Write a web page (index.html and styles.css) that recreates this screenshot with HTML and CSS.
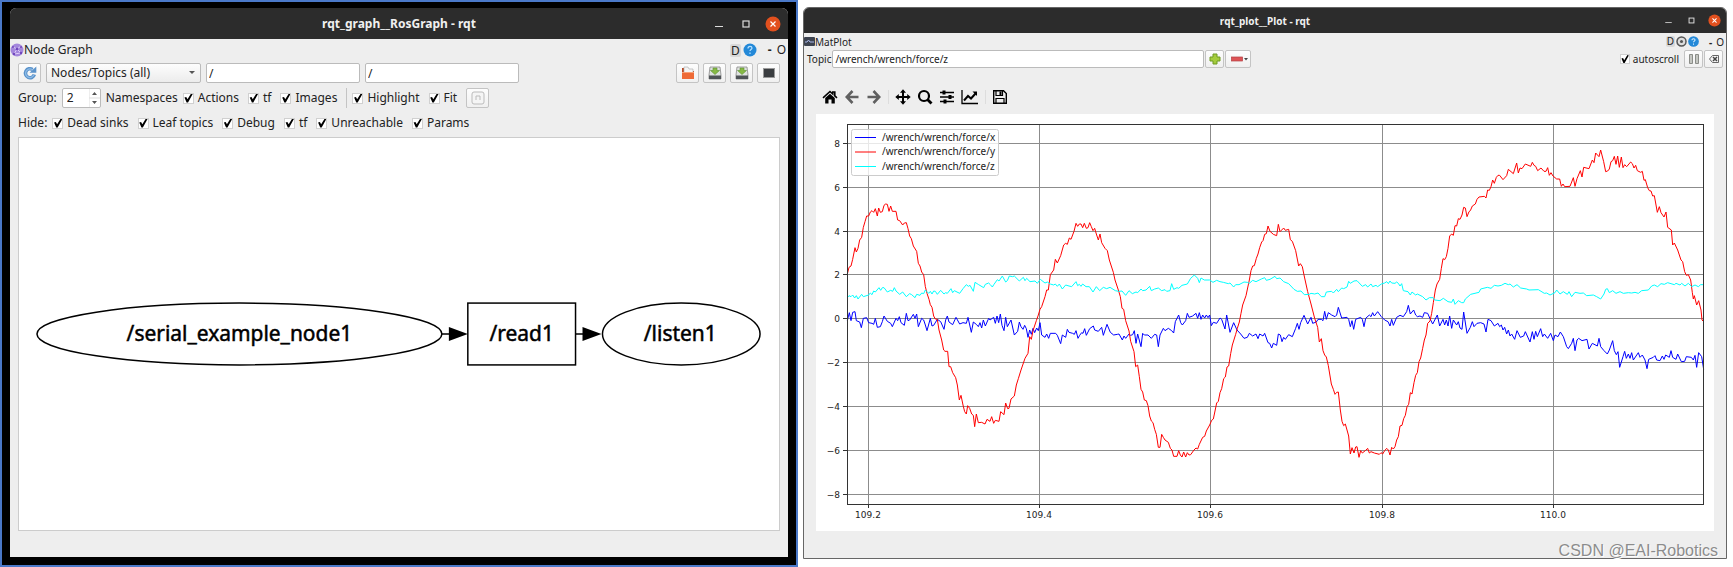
FILE: index.html
```html
<!DOCTYPE html>
<html lang="en">
<head>
	<meta charset="UTF-8">
	<title>rqt</title>
	<link rel="stylesheet" href="styles.css">
</head>
<body>
	<div class="desktop">
		<div class="shot">
			<div class="window">
				<div class="titlebar">
					<h1>rqt_graph__RosGraph - rqt</h1>
					<div class="win-btns">
						<button aria-label="Minimize"><svg width="16" height="16" viewBox="0 0 16 16"><path d="M4 10.500h8" stroke="#ddd" fill="none"/></svg></button>
						<button aria-label="Maximize"><svg width="16" height="16" viewBox="0 0 16 16"><rect x="5" y="5" width="6" height="6" stroke="#ddd" stroke-width="1.200" fill="none"/></svg></button>
						<button aria-label="Close"><svg width="16" height="16" viewBox="0 0 16 16"><circle cx="8" cy="8" r="7.500" fill="#e2501e"/><path d="M5.500 5.500l5 5m0-5l-5 5" stroke="#fff" stroke-width="1.200"/></svg></button>
					</div>
				</div>
				<div class="dock">
					<svg width="14" height="14" viewBox="0 0 14 14"><circle cx="7" cy="7" r="6.500" fill="#a487dc"/><path d="M3 4l4 2 4-3M7 6l-3 5M7 6l4 4M4 11l7-1" stroke="#dccbfa" fill="none"/><g fill="#7046bd"><circle cx="3" cy="4" r="1"/><circle cx="7" cy="6" r="1.300"/><circle cx="11" cy="4" r="1"/><circle cx="4" cy="11" r="1.200"/><circle cx="11" cy="10" r="1.200"/></g></svg>
					<h2>Node Graph</h2>
					<div class="dock-btns">
						<button class="dock-d">D</button>
						<button aria-label="Help"><svg width="14" height="14" viewBox="0 0 14 14"><circle cx="7" cy="7" r="6.500" fill="#2489d8"/><path d="M5 5.500c0-3 4-2.500 4-.500 0 1.500-2 1.500-2 3M7 9.500v1.500" stroke="#b9e2ff" stroke-width="1.200" fill="none"/></svg></button>
						<button class="dock-min">-</button>
						<button>O</button>
					</div>
				</div>
				<div class="row">
					<button class="btn" aria-label="Refresh"><svg width="16" height="16" viewBox="0 0 16 16"><path d="M12.300 9.500A4.500 4.500 0 1 1 10.500 4.500" stroke="#5b93cb" stroke-width="3.600" fill="none"/><path d="M7.500 7.800h6.800V1.500z" fill="#5b93cb"/><path d="M11.800 10A4.300 4.300 0 1 1 10 4.500" stroke="#8dbbe6" stroke-width="1.300" fill="none"/></svg></button>
					<span class="select">
						<select aria-label="Graph type"><option>Nodes/Topics (all)</option></select>
					</span>
					<input class="field" type="text" value="/" aria-label="Node filter">
					<input class="field" type="text" value="/" aria-label="Topic filter">
					<div class="right">
						<button class="btn" aria-label="Open"><svg width="16" height="16" viewBox="0 0 16 16"><path d="M2 3h4v3h8v8H2z" fill="#b84a26"/><path d="M4 2h4l1 2h4v5H4z" fill="#f4f4f4" stroke="#aaa" stroke-width=".600"/><path d="M2 7h12v7H2z" fill="#ee6a36"/><path d="M2 7.500h12" stroke="#f9a177"/></svg></button>
						<button class="btn" aria-label="Save dot"><svg width="16" height="16" viewBox="0 0 16 16"><path d="M3 2h10l1 8v4H2v-4z" fill="#dfe2df" stroke="#888" stroke-width=".800"/><path d="M2 10.500h12V14H2z" fill="#4f5357"/><path d="M6 3h4v2.500h2.500L8 9.500 3.500 5.500H6z" fill="#86b944" stroke="#5c9230" stroke-width=".600"/></svg></button>
						<button class="btn" aria-label="Save svg"><svg width="16" height="16" viewBox="0 0 16 16"><path d="M3 2h10l1 8v4H2v-4z" fill="#dfe2df" stroke="#888" stroke-width=".800"/><path d="M2 10.500h12V14H2z" fill="#4f5357"/><path d="M6 3h4v2.500h2.500L8 9.500 3.500 5.500H6z" fill="#86b944" stroke="#5c9230" stroke-width=".600"/></svg></button>
						<button class="btn" aria-label="Save image"><svg width="16" height="16" viewBox="0 0 16 16"><rect x="2.500" y="3.500" width="11" height="9" fill="#3a3d40" stroke="#999"/></svg></button>
					</div>
				</div>
				<div class="row">
					<label for="group">Group:</label>
					<span class="spin">
						<input type="number" id="group" value="2">
						<svg width="11" height="18" viewBox="0 0 11 18"><path d="M0 0v18M0 9h11" stroke="#ddd" fill="none"/><path d="M3 6l2.500-3L8 6zM3 12l2.500 3L8 12z" fill="#555"/></svg>
					</span>
					<label for="namespaces">Namespaces</label>
					<label class="check"><input type="checkbox" id="namespaces" checked>Actions</label>
					<label class="check"><input type="checkbox" checked>tf</label>
					<label class="check"><input type="checkbox" checked>Images</label>
					<span class="line"></span>
					<label class="check"><input type="checkbox" checked>Highlight</label>
					<label class="check"><input type="checkbox" checked>Fit</label>
					<button class="btn" aria-label="Fit in view"><svg width="16" height="16" viewBox="0 0 16 16"><rect x="2" y="2" width="12" height="12" rx="2" fill="#f5f5f5" stroke="#bbb"/><path d="M6 10V6h4v4" stroke="#bbb" fill="none"/></svg></button>
				</div>
				<div class="row">
					<span>Hide:</span>
					<label class="check"><input type="checkbox" checked>Dead sinks</label>
					<label class="check"><input type="checkbox" checked>Leaf topics</label>
					<label class="check"><input type="checkbox" checked>Debug</label>
					<label class="check"><input type="checkbox" checked>tf</label>
					<label class="check"><input type="checkbox" checked>Unreachable</label>
					<label class="check"><input type="checkbox" checked>Params</label>
				</div>
				<div class="graph">
					<svg viewBox="0 146 762 100">
						<g fill="none" stroke="#000" stroke-width="1.500">
							<ellipse cx="221" cy="196" rx="203" ry="31"/>
							<rect x="450" y="165" width="108" height="62"/>
							<ellipse cx="664" cy="196" rx="79" ry="31"/>
							<path d="M424 196h10M558 196h10"/>
						</g>
						<path d="M431 189l19 7-19 7zM565 189l19 7-19 7z"/>
						<g class="node">
							<text x="221" y="203">/serial_example_node1</text>
							<text x="504" y="203">/read1</text>
							<text x="663" y="203">/listen1</text>
						</g>
					</svg>
				</div>
			</div>
		</div>

		<div class="window plot">
			<div class="titlebar">
				<h1>rqt_plot__Plot - rqt</h1>
				<div class="win-btns">
					<button aria-label="Minimize"><svg width="13" height="13" viewBox="0 0 16 16"><path d="M4 10.500h8" stroke="#ddd" fill="none"/></svg></button>
					<button aria-label="Maximize"><svg width="13" height="13" viewBox="0 0 16 16"><rect x="5" y="5" width="6" height="6" stroke="#ddd" stroke-width="1.200" fill="none"/></svg></button>
					<button aria-label="Close"><svg width="13" height="13" viewBox="0 0 16 16"><circle cx="8" cy="8" r="7.500" fill="#e2501e"/><path d="M5.500 5.500l5 5m0-5l-5 5" stroke="#fff" stroke-width="1.300"/></svg></button>
				</div>
			</div>
			<div class="dock">
				<svg width="11" height="11" viewBox="0 0 11 11"><rect y="1" width="11" height="9" rx="1" fill="#3d4350"/><path d="M1 6h2l1.500-2L6 6h4" stroke="#a9b7e8" fill="none"/></svg>
				<h2>MatPlot</h2>
				<div class="dock-btns">
					<button class="dock-d">D</button>
					<button aria-label="Settings"><svg width="11" height="11" viewBox="0 0 11 11"><circle cx="5.500" cy="5.500" r="4.500" fill="#ddd" stroke="#555" stroke-width="1.500"/><circle cx="5.500" cy="5.500" r="1.500" fill="#555"/></svg></button>
					<button aria-label="Help"><svg width="11" height="11" viewBox="0 0 14 14"><circle cx="7" cy="7" r="6.800" fill="#2489d8"/><path d="M5 5.500c0-3 4-2.500 4-.500 0 1.500-2 1.500-2 3M7 9.500v1.500" stroke="#d5efff" stroke-width="1.300" fill="none"/></svg></button>
					<button class="dock-min">-</button>
					<button>O</button>
				</div>
			</div>
			<div class="row topic">
				<label for="topic">Topic</label>
				<input class="field" type="text" id="topic" value="/wrench/wrench/force/z">
				<button class="btn" aria-label="Add topic"><svg width="12" height="12" viewBox="0 0 12 12"><path d="M4 1h4v3h3v4H8v3H4V8H1V4h3z" fill="#a4cc3c" stroke="#6f9a23"/></svg></button>
				<button class="btn remove" aria-label="Remove topic"><svg width="20" height="12" viewBox="0 0 20 12"><rect x="3.500" y="4" width="11" height="4" fill="#de5356" stroke="#b33f42" stroke-width=".700"/><path d="M16 5h4l-2 2.500z" fill="#444"/></svg></button>
				<div class="right">
					<label class="check"><input type="checkbox" checked>autoscroll</label>
					<button class="btn" aria-label="Pause"><svg width="12" height="12" viewBox="0 0 12 12"><path d="M1.500 1.500h3v9h-3zM7.500 1.500h3v9h-3z" fill="#c5c7c2" stroke="#8b8d88"/></svg></button>
					<button class="btn" aria-label="Clear"><svg width="12" height="12" viewBox="0 0 12 12"><path d="M4.500 2.500h6v7h-6L1.500 6z" fill="none" stroke="#666"/><path d="M5 4l4 4m0-4L5 8" stroke="#444" stroke-width="1.500"/></svg></button>
				</div>
			</div>
			<div class="tools">
				<button aria-label="Home"><svg width="16" height="16" viewBox="0 0 16 16"><path d="M1 8.800L8 2.500l2.800 2.500V3h2v3.800L15 8.800" fill="none" stroke="#000" stroke-width="1.600"/><path d="M3.200 9L8 4.800 12.800 9v5.500H9.500v-4h-3v4H3.200z"/></svg></button>
				<button aria-label="Back"><svg width="16" height="16" viewBox="0 0 16 16"><path d="M8.500 2L2.800 8l5.700 6M3 8h11.500" fill="none" stroke="#606060" stroke-width="2.600"/></svg></button>
				<button aria-label="Forward"><svg width="16" height="16" viewBox="0 0 16 16"><path d="M7.500 2l5.700 6-5.700 6M13 8H1.500" fill="none" stroke="#606060" stroke-width="2.600"/></svg></button>
				<span class="line"></span>
				<button aria-label="Pan"><svg width="16" height="16" viewBox="0 0 16 16"><path d="M8 2v12M2 8h12" stroke="#000" stroke-width="2"/><path d="M8 .300L11 3.800H5zM8 15.700l3-3.500H5zM.300 8l3.500-3v6zM15.700 8l-3.500-3v6z"/></svg></button>
				<button aria-label="Zoom"><svg width="16" height="16" viewBox="0 0 16 16"><circle cx="7" cy="7" r="5" fill="none" stroke="#000" stroke-width="2.200"/><path d="M10.500 10.500l4 4" stroke="#000" stroke-width="2.800"/></svg></button>
				<button aria-label="Configure"><svg width="16" height="16" viewBox="0 0 16 16"><path d="M1 3.500h14M1 8h14M1 12.500h14" stroke="#000" stroke-width="1.500"/><path d="M3.500 1.500h3v4h-3zM9.500 6h3v4h-3zM4.500 10.500h3v4h-3z"/></svg></button>
				<button aria-label="Edit curves"><svg width="18" height="16" viewBox="0 0 18 16"><path d="M1 1v13.500h16" fill="none" stroke="#000" stroke-width="1.300"/><path d="M3 11.500l4-4.500 3 2.500 5-5.500" fill="none" stroke="#000" stroke-width="2"/><path d="M11.500 2.500H16V7z"/></svg></button>
				<span class="line"></span>
				<button aria-label="Save"><svg width="16" height="16" viewBox="0 0 16 16"><path d="M1.700 1.700h9.800l2.800 2.800v9.800H1.700z" fill="none" stroke="#000" stroke-width="1.400"/><path d="M4 2v4.500h6.500V2M4 14V9.500h8V14" fill="none" stroke="#000" stroke-width="1.200"/><path d="M7.500 2.500h2V6h-2z"/></svg></button>
			</div>
			<div class="figure">
				<svg viewBox="0 0 898 417">
					<path class="grid" d="M52.500 10v380M223.500 10v380M394.500 10v380M566.500 10v380M737.500 10v380M31 29.500h857M31 73.500h857M31 117.500h857M31 160.500h857M31 204.500h857M31 248.500h857M31 292.500h857M31 336.500h857M31 380.500h857"/>
					<path class="ticks" d="M52.500 390v4M223.500 390v4M394.500 390v4M566.500 390v4M737.500 390v4M31 29.500h-4M31 73.500h-4M31 117.500h-4M31 160.500h-4M31 204.500h-4M31 248.500h-4M31 292.500h-4M31 336.500h-4M31 380.500h-4"/>
					<!-- series, 3 units per pixel -->
					<svg class="series" width="898" height="417" viewBox="0 0 2694 1251">
						<polyline stroke="#00f" points="94,620 100,596 105,620 110,595 117,593 121,620 131,624 136,641 142,613 152,611 158,626 168,628 173,631 178,613 184,640 193,638 199,623 204,606 214,622 224,628 229,638 240,613 245,620 250,608 255,626 265,634 271,598 276,620 281,618 292,601 297,613 302,600 307,638 317,613 323,618 328,633 333,650 343,613 348,636 353,634 364,616 374,623 384,646 389,618 394,606 399,624 410,632 420,610 431,630 441,626 451,628 456,610 466,655 472,624 482,632 487,638 492,626 497,642 502,618 508,636 518,613 522,618 533,610 538,628 543,606 548,626 553,600 558,634 564,650 569,610 574,638 585,618 595,663 605,652 610,624 615,638 621,646 626,634 631,644 636,670 641,648 646,661 651,643 656,656 662,642 667,650 672,626 677,663 687,670 692,660 698,673 703,658 719,658 724,664 734,689 739,663 749,670 754,646 759,655 770,658 775,661 780,650 786,673 791,664 797,656 801,658 806,644 811,664 821,644 832,636 836,648 847,652 857,640 862,664 873,631 883,655 893,663 904,661 909,660 919,678 924,666 929,673 939,660 944,664 950,662 955,650 960,688 965,660 975,698 980,658 985,663 996,663 1006,673 1016,661 1022,663 1027,698 1032,663 1042,643 1047,650 1057,643 1067,650 1073,657 1078,623 1088,603 1094,626 1099,633 1109,620 1114,598 1119,610 1130,606 1140,598 1145,613 1150,596 1155,616 1160,603 1166,612 1171,603 1176,611 1181,603 1186,635 1192,625 1202,628 1212,612 1217,616 1227,645 1232,603 1242,655 1253,626 1263,648 1274,660 1284,673 1294,670 1300,658 1310,666 1320,660 1326,674 1331,660 1341,666 1346,658 1356,686 1361,688 1367,702 1372,688 1382,694 1387,660 1393,663 1398,683 1403,670 1408,676 1418,662 1429,668 1439,643 1444,628 1449,646 1454,626 1464,604 1475,630 1485,610 1490,628 1501,624 1506,616 1516,616 1521,620 1526,592 1531,616 1537,596 1547,603 1557,608 1562,603 1567,580 1577,612 1593,610 1598,616 1603,638 1608,620 1613,646 1619,616 1634,610 1639,616 1644,638 1649,613 1660,603 1665,608 1670,596 1675,606 1685,593 1696,608 1706,618 1716,623 1722,636 1727,616 1732,634 1742,610 1752,604 1762,608 1772,593 1777,574 1783,600 1793,588 1799,603 1804,608 1812,606 1820,610 1825,596 1835,598 1842,614 1850,630 1864,603 1871,636 1881,616 1886,633 1891,618 1896,636 1901,606 1907,643 1912,618 1922,633 1927,623 1932,642 1938,646 1943,594 1953,658 1963,640 1969,623 1974,638 1983,628 1994,626 2004,630 2010,654 2016,616 2025,620 2035,636 2046,628 2051,638 2056,633 2061,648 2066,640 2072,660 2077,648 2082,666 2087,660 2096,676 2103,650 2113,670 2123,666 2128,653 2142,684 2149,653 2154,676 2159,652 2164,668 2174,644 2180,668 2185,660 2195,673 2204,658 2212,680 2217,663 2226,668 2233,654 2242,668 2252,698 2257,704 2267,688 2272,673 2277,710 2283,678 2288,673 2298,680 2313,676 2319,705 2329,688 2344,696 2349,673 2354,698 2364,710 2374,720 2380,708 2390,680 2395,710 2401,722 2406,713 2411,760 2421,728 2426,712 2431,733 2437,720 2442,733 2447,716 2452,738 2467,716 2472,730 2479,723 2487,738 2493,764 2498,736 2512,730 2517,725 2522,738 2532,740 2539,726 2544,736 2549,723 2560,730 2565,710 2570,730 2580,736 2585,720 2596,743 2606,742 2611,728 2626,730 2632,738 2637,724 2642,760 2648,716 2657,728 2663,766"/>
						<polyline stroke="#f00" points="94,480 99,460 105,456 110,436 117,401 121,414 126,403 131,378 137,370 142,340 147,323 152,306 158,306 163,294 168,290 173,295 178,284 184,306 188,282 193,295 199,293 204,274 209,270 214,271 219,292 224,276 229,292 240,292 245,318 251,320 260,333 265,327 271,326 276,344 281,366 286,374 292,396 302,412 307,448 312,456 317,474 323,482 328,518 333,538 339,556 343,572 348,580 353,606 358,615 364,616 369,648 377,678 383,708 387,712 395,712 399,758 404,758 410,776 419,791 424,813 430,858 435,844 441,873 446,893 451,900 455,875 461,883 467,900 472,904 476,938 481,900 487,926 497,925 507,930 513,916 522,922 527,908 533,928 538,919 549,922 554,893 564,902 569,867 575,884 579,883 585,855 595,846 601,813 607,794 615,768 627,733 636,718 641,668 646,676 651,650 661,620 666,606 672,586 677,578 687,548 692,528 697,528 703,482 713,468 718,436 724,447 734,425 743,393 749,388 754,391 760,372 765,376 774,352 780,328 785,337 790,330 795,330 800,341 805,328 811,343 816,341 821,326 826,338 831,350 836,343 841,360 847,378 852,360 857,386 867,403 874,410 880,438 892,475 897,498 907,528 913,548 918,583 923,586 929,620 939,651 944,682 954,713 959,758 965,753 970,788 975,826 980,834 985,858 991,860 996,875 1001,906 1006,921 1011,926 1016,946 1021,961 1027,1000 1032,1000 1037,961 1042,970 1047,978 1057,985 1063,1003 1068,1008 1073,1027 1083,1027 1088,1010 1093,1023 1098,1029 1103,1014 1109,1029 1114,1016 1119,1023 1124,1022 1134,1008 1140,1002 1145,1005 1150,991 1160,970 1166,967 1171,951 1181,933 1187,919 1192,915 1197,891 1202,867 1207,862 1212,836 1217,824 1223,794 1228,789 1233,759 1238,756 1244,719 1249,693 1259,661 1264,643 1270,624 1275,598 1280,573 1290,545 1300,498 1305,470 1310,456 1315,455 1321,433 1326,420 1331,401 1337,384 1341,380 1346,361 1351,359 1356,336 1362,352 1372,361 1382,365 1387,331 1392,353 1403,342 1408,349 1418,346 1423,377 1429,382 1439,410 1448,456 1453,449 1459,458 1464,483 1475,533 1485,570 1496,613 1505,640 1510,684 1516,674 1521,710 1526,723 1531,729 1537,755 1546,810 1552,826 1557,841 1562,835 1567,834 1573,888 1578,922 1583,935 1588,930 1593,948 1598,966 1603,1020 1608,1001 1614,1017 1619,999 1623,998 1629,1030 1634,1010 1639,1017 1649,1009 1655,1003 1660,1017 1665,1013 1675,1017 1690,1021 1695,1016 1700,1020 1706,1010 1712,1003 1717,1008 1722,1023 1727,1000 1732,1005 1737,998 1742,978 1747,968 1752,936 1758,934 1763,914 1768,904 1773,878 1778,871 1783,836 1788,840 1794,806 1799,784 1804,776 1809,743 1814,732 1820,703 1825,678 1830,663 1835,628 1842,621 1847,598 1852,566 1858,528 1863,510 1871,496 1876,463 1881,434 1886,437 1891,428 1896,403 1901,366 1907,360 1912,364 1917,335 1922,336 1927,314 1932,316 1938,303 1943,280 1948,282 1953,308 1959,293 1963,290 1969,276 1978,270 1983,256 1989,249 2005,247 2010,252 2015,228 2020,229 2025,218 2030,198 2035,208 2041,190 2046,184 2051,184 2061,197 2072,185 2077,166 2092,179 2102,147 2107,177 2112,162 2118,164 2128,150 2144,157 2149,145 2154,154 2159,157 2165,170 2175,162 2184,172 2190,172 2195,161 2200,184 2205,176 2211,186 2222,195 2231,195 2236,217 2241,210 2246,218 2262,217 2272,191 2277,217 2283,194 2293,170 2298,189 2303,160 2319,164 2329,138 2334,146 2339,117 2349,128 2354,108 2363,143 2369,173 2375,171 2380,165 2385,143 2390,140 2395,127 2400,151 2405,126 2410,160 2416,129 2421,161 2426,152 2432,158 2444,144 2449,149 2454,162 2459,154 2464,170 2474,175 2479,172 2484,199 2488,197 2495,221 2500,230 2505,231 2510,246 2515,245 2524,295 2530,278 2535,296 2544,309 2550,294 2555,340 2566,348 2570,393 2575,387 2585,408 2595,438 2600,443 2606,473 2611,484 2617,482 2624,498 2629,536 2632,555 2635,545 2642,573 2648,560 2655,588 2658,618 2663,623"/>
						<polyline stroke="#0ff" points="94,551 99,545 105,548 110,543 116,552 121,545 126,555 137,541 142,548 158,543 163,537 168,542 173,531 178,534 189,521 194,529 199,521 204,521 214,534 224,529 230,532 235,521 240,531 251,541 260,534 271,548 281,539 287,542 297,551 302,541 312,544 317,537 323,539 328,528 338,538 343,532 348,540 353,531 358,532 364,541 374,529 384,540 389,536 394,538 405,524 410,536 415,530 431,538 441,524 451,512 457,517 462,514 472,532 477,505 488,512 503,521 508,511 518,507 523,512 529,519 534,511 544,497 549,501 559,486 569,504 574,500 580,486 590,488 595,486 610,501 622,490 627,500 632,493 642,503 657,501 664,508 673,496 678,500 687,507 694,504 703,510 713,513 718,510 724,517 730,510 739,525 749,513 759,516 767,518 780,503 785,515 790,511 795,517 800,510 810,518 820,518 831,534 841,518 851,530 862,520 872,524 882,520 898,530 908,532 918,531 929,544 939,530 949,539 960,534 965,536 975,525 980,530 990,528 1001,517 1006,530 1016,525 1027,522 1037,530 1047,527 1052,532 1062,530 1067,509 1073,526 1083,521 1088,523 1098,514 1114,510 1124,493 1135,483 1145,493 1150,506 1155,492 1165,498 1181,498 1191,505 1202,499 1212,503 1222,505 1237,509 1242,507 1253,519 1259,512 1269,512 1284,504 1294,505 1300,508 1310,499 1320,503 1336,495 1346,491 1351,499 1362,496 1377,487 1382,494 1392,492 1403,503 1418,509 1434,526 1444,532 1455,531 1465,542 1480,541 1485,538 1496,540 1506,537 1516,548 1526,548 1531,534 1547,532 1552,537 1562,526 1567,533 1577,522 1583,524 1593,519 1598,502 1603,508 1614,501 1623,500 1639,517 1649,512 1655,519 1665,510 1670,518 1680,514 1685,518 1696,510 1706,507 1712,503 1717,509 1722,501 1727,507 1737,508 1742,504 1747,508 1752,516 1757,509 1762,530 1776,533 1783,543 1788,534 1799,543 1804,540 1820,548 1830,558 1840,551 1851,551 1856,558 1872,560 1882,553 1896,563 1907,565 1912,555 1917,571 1927,560 1937,566 1943,566 1948,555 1964,541 1989,535 1994,525 2014,520 2025,523 2035,514 2046,516 2056,514 2067,508 2077,512 2082,510 2092,519 2103,512 2114,522 2132,525 2139,528 2167,527 2185,538 2192,537 2202,543 2217,536 2222,528 2232,540 2242,533 2254,541 2259,533 2267,548 2277,535 2292,538 2302,537 2312,545 2332,543 2342,548 2354,555 2364,540 2369,526 2374,524 2380,536 2390,530 2400,538 2412,533 2422,538 2437,536 2447,537 2457,535 2467,538 2477,530 2497,528 2507,516 2515,513 2525,518 2535,509 2545,511 2555,506 2565,509 2575,512 2580,508 2592,513 2597,508 2607,516 2617,508 2627,518 2637,513 2647,518 2654,512 2663,512"/>
					</svg>
					<rect class="axes" x="31.500" y="10.500" width="856" height="380"/>
					<g class="xlabels">
						<text x="52" y="404">109.2</text>
						<text x="223" y="404">109.4</text>
						<text x="394" y="404">109.6</text>
						<text x="566" y="404">109.8</text>
						<text x="737" y="404">110.0</text>
					</g>
					<g class="ylabels">
						<text x="24" y="33">8</text>
						<text x="24" y="77">6</text>
						<text x="24" y="121">4</text>
						<text x="24" y="164">2</text>
						<text x="24" y="208">0</text>
						<text x="24" y="252">−2</text>
						<text x="24" y="296">−4</text>
						<text x="24" y="340">−6</text>
						<text x="24" y="384">−8</text>
					</g>
					<rect x="35.500" y="15.500" width="147" height="46" rx="2" fill="#fff" fill-opacity=".8" stroke="#ccc"/>
					<path d="M39 23.500h21" stroke="#00f"/>
					<path d="M39 38h21" stroke="#f00"/>
					<path d="M39 52.500h21" stroke="#0ff"/>
					<g class="legend">
						<text x="66" y="27">/wrench/wrench/force/x</text>
						<text x="66" y="41">/wrench/wrench/force/y</text>
						<text x="66" y="56">/wrench/wrench/force/z</text>
					</g>
				</svg>
			</div>
		</div>
		<p class="watermark">CSDN @EAI-Robotics</p>
	</div>
</body>
</html>
```
FILE: styles.css
```css
*{
	box-sizing: border-box;
}
body,h1,h2,p{
	margin: 0;
	padding: 0;
}
body{
	background: #fff;
	color: #222;
	font: 12px/16px "Noto Sans","Open Sans",sans-serif;
}
button,input,select{
	font: inherit;
	color: inherit;
	margin: 0;
	padding: 0;
	border: none;
	background: none;
}
svg{
	display: block;
}
.desktop{
	position: relative;
	display: grid;
	grid-template-columns: minmax(0,798fr) minmax(0,924fr);
	gap: 5px;
	min-height: 100vh;
	padding-right: 6px;
}
.shot{
	display: flex;
	background: #000;
	border: 2px solid #4a78c8;
	padding: 6px 8px 8px;
}
.window{
	display: flex;
	flex-direction: column;
	flex: 1;
	min-width: 0;
	background: #eee;
	border-radius: 6px 6px 0 0;
	overflow: hidden;
}

/* title bar */
.titlebar{
	position: relative;
	display: flex;
	align-items: center;
	justify-content: center;
	height: 31px;
	background: #2c2c2c;
	color: #f0f0f0;
}
.titlebar h1{
	font-size: 12px;
	font-weight: 700;
}
.win-btns{
	position: absolute;
	right: 7px;
	display: flex;
	gap: 11px;
}

/* dock header */
.dock{
	display: flex;
	align-items: center;
	height: 22px;
}
.dock h2{
	font-size: 12px;
	font-weight: 400;
}
.dock-btns{
	display: flex;
	align-items: center;
	margin-left: auto;
	padding-right: 2px;
	gap: 2px;
}
.dock-d{
	background: #d8d8d8;
	border-radius: 2px;
	line-height: 13px;
	padding: 0 1px;
}
.dock-min{
	margin: 0 3px 0 9px;
	font-weight: 700;
}

/* rows of controls */
.row{
	display: flex;
	align-items: center;
	gap: 5px;
	height: 20px;
	margin: 2px 8px 3px;
}
.right{
	display: flex;
	gap: 4px;
	margin-left: auto;
}
.btn{
	display: flex;
	align-items: center;
	justify-content: center;
	width: 23px;
	height: 20px;
	border: 1px solid #c4c4c4;
	border-radius: 2px;
	background: linear-gradient(#fdfdfd,#f0f0f0);
}
.select{
	position: relative;
	width: 155px;
}
.select select{
	display: block;
	appearance: none;
	width: 100%;
	height: 20px;
	padding-left: 4px;
	border: 1px solid #bbb;
	border-radius: 2px;
	background: linear-gradient(#fdfdfd,#ececec);
}
.select:after{
	position: absolute;
	right: 6px;
	top: 8px;
	border: 3px solid transparent;
	border-top-color: #555;
	content: "";
}
.field{
	width: 154px;
	height: 20px;
	padding: 0 2px;
	border: 1px solid #bbb;
	border-radius: 2px;
	background: #fff;
}
.spin{
	display: flex;
	width: 39px;
	height: 20px;
	border: 1px solid #bbb;
	border-radius: 2px;
	background: #fff;
}
.spin input{
	appearance: textfield;
	width: 26px;
	padding-left: 4px;
}
.check{
	display: flex;
	align-items: center;
	gap: 4px;
	margin-right: 4px;
}
.check input{
	appearance: none;
	width: 11px;
	height: 11px;
	border: 1px solid #d0d0d0;
	background: #fff;
}
.check input:checked:before{
	display: block;
	width: 9px;
	height: 9px;
	background: #000;
	clip-path: polygon(8% 45%,28% 38%,42% 65%,82% 0,100% 5%,48% 100%,32% 100%);
	content: "";
}
.line{
	width: 1px;
	height: 20px;
	background: #c4c4c4;
}
.graph{
	flex: 1;
	margin: 1px 8px 26px;
	border: 1px solid #ccc;
	background: #fff;
}
.graph svg{
	width: 100%;
	height: 100%;
}
.node{
	font-size: 21px;
	text-anchor: middle;
	fill: #000;
	stroke: #000;
	stroke-width: 0.5px;
}

/* plot window */
.plot{
	margin: 7px 0 8px;
	border: 1px solid #666;
	font-size: 10px;
}
.plot .titlebar{
	height: 25px;
}
.plot .titlebar h1{
	font-size: 10px;
}
.plot .dock{
	height: 17px;
}
.plot .dock h2{
	font-size: 10px;
}
.plot .win-btns{
	right: 5px;
	gap: 10px;
}
.plot .dock-btns{
	gap: 1px;
}
.plot .dock-d{
	line-height: 11px;
}
.plot .row{
	gap: 1px;
	height: 18px;
	margin: 0 3px;
}
.plot .field{
	width: 372px;
	height: 18px;
}
.plot .btn{
	width: 19px;
	height: 18px;
}
.plot .btn.remove{
	width: 26px;
}
.plot .right{
	gap: 1px;
}
.plot .check{
	gap: 3px;
}
.plot .check input{
	width: 10px;
	height: 10px;
}
.plot .check input:checked:before{
	width: 8px;
	height: 8px;
}
.tools{
	display: flex;
	align-items: center;
	gap: 6px;
	height: 16px;
	margin: 21px 18px 9px;
}
.tools .line{
	height: 14px;
	background: #ddd;
}
.figure{
	margin: 0 12px;
	background: #fff;
}
.figure svg{
	width: 100%;
}
.grid{
	stroke: #8c8c8c;
	fill: none;
}
.ticks,.axes{
	stroke: #333;
	fill: none;
}
.series polyline{
	fill: none;
	stroke-width: 3;
	stroke-linejoin: round;
}
.xlabels,.ylabels{
	font: 9px "DejaVu Sans",sans-serif;
	fill: #222;
}
.xlabels{
	text-anchor: middle;
}
.ylabels{
	text-anchor: end;
}
.legend{
	font-size: 10px;
	fill: #222;
}

.watermark{
	position: absolute;
	right: 15px;
	bottom: 6px;
	font: 16px/20px "Liberation Sans",sans-serif;
	color: #8c8c8c;
	text-shadow: 1px 1px 0 #fff;
}
```
